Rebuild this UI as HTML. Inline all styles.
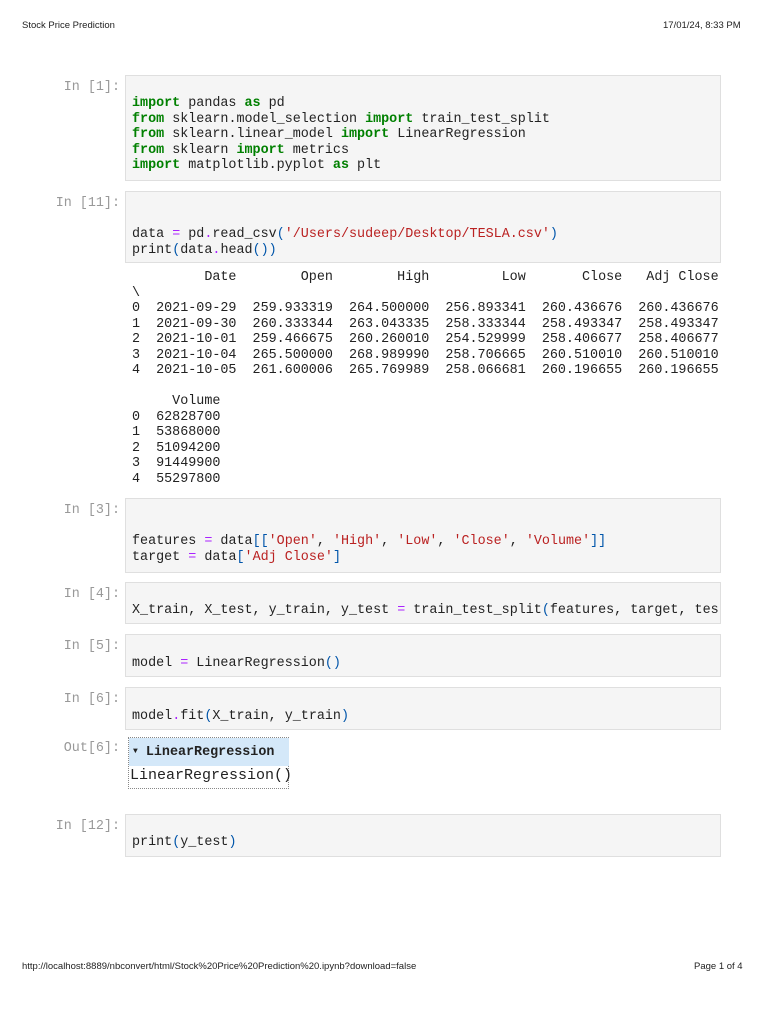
<!DOCTYPE html>
<html><head><meta charset="utf-8"><style>
body{margin:0;width:768px;height:1024px;background:#fff;position:relative;font-family:"Liberation Sans",sans-serif;overflow:hidden}
.hd{position:absolute;font-size:9.5px;color:#222}
.lbl{position:absolute;right:648px;font-family:"Liberation Mono",monospace;font-size:13.4px;color:#999;white-space:pre}
.box{position:absolute;left:125px;width:594px;background:#f5f5f5;border:1px solid #dfdfdf}
pre{margin:0;position:absolute;left:132px;font-family:"Liberation Mono",monospace;font-size:13.4px;line-height:15.5px;color:#222;white-space:pre;overflow:hidden}
.k{color:#008000;font-weight:bold}.o{color:#aa22ff}.s{color:#ba2121}.p{color:#0055aa}
</style></head><body>
<div class="hd" style="left:22px;top:20px">Stock Price Prediction</div>
<div class="hd" style="left:663px;top:20px">17/01/24, 8:33 PM</div>

<div class="lbl" style="top:80px">In [1]:</div>
<div class="box" style="top:75px;height:104px"></div>
<pre style="top:96px"><span class="k">import</span> pandas <span class="k">as</span> pd
<span class="k">from</span> sklearn.model_selection <span class="k">import</span> train_test_split
<span class="k">from</span> sklearn.linear_model <span class="k">import</span> LinearRegression
<span class="k">from</span> sklearn <span class="k">import</span> metrics
<span class="k">import</span> matplotlib.pyplot <span class="k">as</span> plt</pre>

<div class="lbl" style="top:196px">In [11]:</div>
<div class="box" style="top:191px;height:70px"></div>
<pre style="top:227px">data <span class="o">=</span> pd<span class="o">.</span>read_csv<span class="p">(</span><span class="s">'/Users/sudeep/Desktop/TESLA.csv'</span><span class="p">)</span>
print<span class="p">(</span>data<span class="o">.</span>head<span class="p">())</span></pre>

<pre style="top:270px;width:590px">         Date        Open        High         Low       Close   Adj Close
\
0  2021-09-29  259.933319  264.500000  256.893341  260.436676  260.436676
1  2021-09-30  260.333344  263.043335  258.333344  258.493347  258.493347
2  2021-10-01  259.466675  260.260010  254.529999  258.406677  258.406677
3  2021-10-04  265.500000  268.989990  258.706665  260.510010  260.510010
4  2021-10-05  261.600006  265.769989  258.066681  260.196655  260.196655

     Volume
0  62828700
1  53868000
2  51094200
3  91449900
4  55297800</pre>

<div class="lbl" style="top:503px">In [3]:</div>
<div class="box" style="top:498px;height:73px"></div>
<pre style="top:534px">features <span class="o">=</span> data<span class="p">[[</span><span class="s">'Open'</span>, <span class="s">'High'</span>, <span class="s">'Low'</span>, <span class="s">'Close'</span>, <span class="s">'Volume'</span><span class="p">]]</span>
target <span class="o">=</span> data<span class="p">[</span><span class="s">'Adj Close'</span><span class="p">]</span></pre>

<div class="lbl" style="top:587px">In [4]:</div>
<div class="box" style="top:582px;height:40px"></div>
<pre style="top:603px;width:588px">X_train, X_test, y_train, y_test <span class="o">=</span> train_test_split<span class="p">(</span>features, target, tes</pre>

<div class="lbl" style="top:639px">In [5]:</div>
<div class="box" style="top:634px;height:41px"></div>
<pre style="top:656px">model <span class="o">=</span> LinearRegression<span class="p">()</span></pre>

<div class="lbl" style="top:692px">In [6]:</div>
<div class="box" style="top:687px;height:41px"></div>
<pre style="top:709px">model<span class="o">.</span>fit<span class="p">(</span>X_train, y_train<span class="p">)</span></pre>

<div class="lbl" style="top:741px">Out[6]:</div>
<div style="position:absolute;left:128px;top:737px;width:161px;height:52px;border:1px dotted #888;box-sizing:border-box"></div>
<div style="position:absolute;left:129px;top:738px;width:160px;height:28px;background:#d4e8f9"></div>
<pre style="top:744px;font-weight:bold;color:#222;left:133px"><span style="font-size:8px;vertical-align:2px;font-weight:normal">▼</span> LinearRegression</pre>
<pre style="top:767px;left:130px;font-size:15px;line-height:18px">LinearRegression()</pre>

<div class="lbl" style="top:819px">In [12]:</div>
<div class="box" style="top:814px;height:41px"></div>
<pre style="top:835px">print<span class="p">(</span>y_test<span class="p">)</span></pre>

<div class="hd" style="left:22px;top:961px">http://localhost:8889/nbconvert/html/Stock%20Price%20Prediction%20.ipynb?download=false</div>
<div class="hd" style="left:694px;top:961px">Page 1 of 4</div>
</body></html>
